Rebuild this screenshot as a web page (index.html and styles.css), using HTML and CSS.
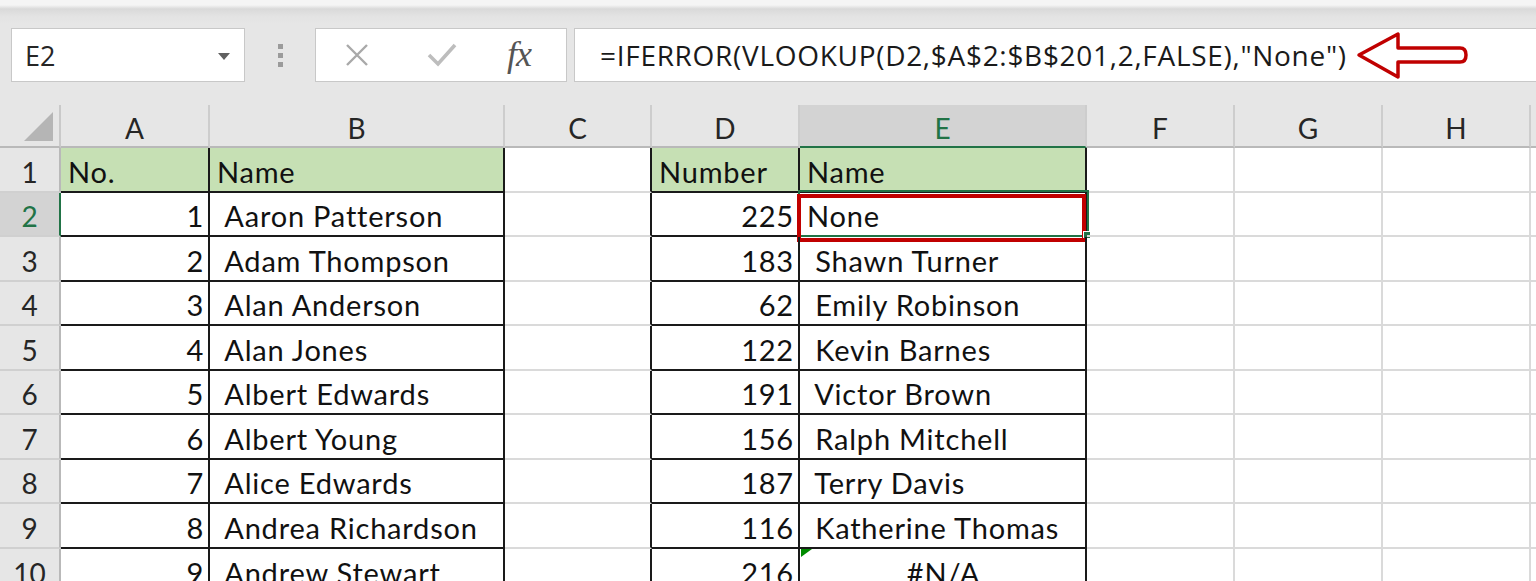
FILE: index.html
```html
<!DOCTYPE html>
<html lang="en">
<head>
  <meta charset="UTF-8">
  <title>IFERROR VLOOKUP</title>
  <link rel="stylesheet" href="styles.css">
</head>
<body>

  <div class="toolbar">
    <div class="name-box">
      <span>E2</span>
      <span class="caret"></span>
    </div>
    <div class="grip"><i></i><i></i><i></i></div>
    <div class="fx-tools">
      <svg class="ico-x" width="28" height="22" viewBox="0 0 28 22"><path d="M4 1 L24 21 M24 1 L4 21" stroke="#a9a9a9" stroke-width="2.4" fill="none"/></svg>
      <svg class="ico-check" width="32" height="26" viewBox="0 0 32 26"><path d="M3 13 L12 22 L29 3" stroke="#bdbdbd" stroke-width="3.6" fill="none"/></svg>
      <span class="fx">fx</span>
    </div>
    <div class="formula">
      <span>=IFERROR(VLOOKUP(D2,$A$2:$B$201,2,FALSE),"None")</span>
      <svg class="arrow" width="114" height="50" viewBox="0 0 114 50">
        <path d="M3 24 L42 3 L42 17 L104 17 Q110 17 110 24 Q110 31 104 31 L42 31 L42 46 Z" fill="#fff" stroke="#c00000" stroke-width="3.5" stroke-linejoin="round"/>
      </svg>
    </div>
  </div>

  <div class="sheet" id="sheet"></div>

  <script>
    const left = [
      [1, "Aaron Patterson"], [2, "Adam Thompson"], [3, "Alan Anderson"],
      [4, "Alan Jones"], [5, "Albert Edwards"], [6, "Albert Young"],
      [7, "Alice Edwards"], [8, "Andrea Richardson"], [9, "Andrew Stewart"]
    ];
    const right = [
      [225, "None"], [183, " Shawn Turner"], [62, " Emily Robinson"],
      [122, " Kevin Barnes"], [191, " Victor Brown"], [156, " Ralph Mitchell"],
      [187, " Terry Davis"], [116, " Katherine Thomas"], [216, "#N/A"]
    ];
    const cols = ["A", "B", "C", "D", "E", "F", "G", "H", ""];
    const sheet = document.getElementById("sheet");

    function add(cls, text) {
      const el = document.createElement("div");
      el.className = cls;
      if (text !== undefined) el.textContent = text;
      sheet.appendChild(el);
      return el;
    }

    // column headers
    add("corner");
    cols.forEach(c => add(c === "E" ? "col-hd sel" : "col-hd", c));

    for (let r = 1; r <= 10; r++) {
      add(r === 2 ? "row-hd sel" : "row-hd", r);
      const L = left[r - 2];
      const R = right[r - 2];

      if (r === 1) {
        add("cell box head", "No.");
        add("cell box head", "Name");
        add("cell pre-box");
        add("cell box head", "Number");
        add("cell box head", "Name");
      } else {
        add("cell box num", L[0]);
        add("cell box", " " + L[1]);
        add("cell pre-box");
        add("cell box num", R[0]);
        const e = add(r === 10 ? "cell box center" : "cell box", R[1]);
        if (r === 2) {
          e.classList.add("active");
          e.insertAdjacentHTML("beforeend", '<span class="focus"></span><span class="mark"></span><span class="handle"></span>');
        }
        if (r === 10) {
          e.insertAdjacentHTML("beforeend", '<span class="err"></span>');
        }
      }
      add("cell"); add("cell"); add("cell"); add("cell");
    }
  </script>

</body>
</html>
```

FILE: styles.css
```css
body {
  margin: 0;
  background: #e6e6e6;
  font-family: Lato, "Open Sans", sans-serif;
  color: #111;
  overflow: hidden;
}

/* formula bar */
.toolbar {
  height: 105px;
  box-sizing: border-box;
  padding: 28px 0 0 11px;
  display: flex;
  align-items: flex-start;
  background: linear-gradient(#f5f5f5 0, #f5f5f5 5px, #d9d9d9 9px, #e3e3e3 16px, #e6e6e6 24px);
}

.name-box,
.fx-tools,
.formula {
  height: 54px;
  box-sizing: border-box;
  background: #fff;
  border: 1px solid #c8c8c8;
  display: flex;
  align-items: center;
}

.name-box {
  width: 234px;
  padding: 0 14px 0 13px;
  justify-content: space-between;
  font-family: "Open Sans", sans-serif;
  font-size: 27px;
  color: #262626;
}

.caret {
  width: 0;
  height: 0;
  border-left: 6px solid transparent;
  border-right: 6px solid transparent;
  border-top: 7px solid #606060;
  margin-top: 2px;
}

.grip {
  width: 70px;
  height: 54px;
  display: flex;
  flex-direction: column;
  align-items: center;
  justify-content: center;
  gap: 4px;
}

.grip i {
  width: 5px;
  height: 5px;
  background: #9b9b9b;
}

.fx-tools {
  width: 252px;
}

.ico-x { margin-left: 27px; }
.ico-check { margin-left: 55px; }

.fx {
  margin-left: 49px;
  margin-top: -3px;
  font-family: "Liberation Serif", serif;
  font-style: italic;
  font-size: 36px;
  color: #555;
  letter-spacing: -1px;
}

.formula {
  flex: 1;
  margin-left: 7px;
  margin-right: -2px;
  padding-left: 25px;
  font-family: "Open Sans", sans-serif;
  font-size: 28px;
  color: #1a1a1a;
  letter-spacing: 0.7px;
}

.arrow {
  margin-left: 9px;
  margin-top: 2px;
}

/* grid */
.sheet {
  display: grid;
  grid-template-columns: 61px 149px 295px 147px 148px 287px 148px 148px 148px 1fr;
  grid-template-rows: 43px 45px 44px 45px 44px 45px 44px 45px 44px 45px 45px;
  background: #fff;
}

.corner {
  background: #e6e6e6;
  border-right: 2px solid #c9c9c9;
  border-bottom: 2px solid #b9b9b9;
  position: relative;
}

.corner::after {
  content: "";
  position: absolute;
  right: 6px;
  bottom: 5px;
  border-left: 29px solid transparent;
  border-bottom: 29px solid #b5b5b5;
}

.col-hd,
.row-hd {
  background: #e6e6e6;
  display: flex;
  align-items: center;
  justify-content: center;
  font-size: 28px;
  color: #262626;
  box-sizing: border-box;
}

.col-hd {
  border-right: 2px solid #cdcdcd;
  border-bottom: 2px solid #b9b9b9;
  padding-top: 4px;
}

.row-hd {
  border-right: 2px solid #b9b9b9;
  border-bottom: 2px solid #d0d0d0;
  padding-top: 4px;
}

.col-hd.sel {
  background: #d3d3d3;
  color: #217346;
  border-bottom-color: #217346;
}

.row-hd.sel {
  background: #d3d3d3;
  color: #217346;
  border-right-color: #217346;
}

.cell {
  box-sizing: border-box;
  border-right: 2px solid #dadada;
  border-bottom: 2px solid #dadada;
  font-size: 29px;
  letter-spacing: 0.8px;
  white-space: pre;
  display: flex;
  align-items: flex-end;
  padding: 0 5px 2px 7px;
  position: relative;
  color: #111;
}

.cell.box { border-color: #1a1a1a; }
.cell.pre-box { border-right-color: #1a1a1a; }
.cell.head { background: #c6e0b4; }
.cell.num { justify-content: flex-end; padding-right: 4px; }
.cell.center { justify-content: center; }

/* selected cell */
.focus {
  position: absolute;
  left: -2px;
  top: -3px;
  right: -4px;
  bottom: -2px;
  border: 2px solid #217346;
}

.mark {
  position: absolute;
  left: -3px;
  top: 1px;
  width: 289px;
  height: 48px;
  box-sizing: border-box;
  border: 4px solid #c00000;
}

.handle {
  position: absolute;
  right: -5px;
  bottom: -3px;
  width: 6px;
  height: 6px;
  background: #217346;
  border-left: 1px solid #fff;
  border-top: 1px solid #fff;
}

.err {
  position: absolute;
  left: 1px;
  top: 0;
  border-top: 8px solid #008a00;
  border-right: 11px solid transparent;
}
```
